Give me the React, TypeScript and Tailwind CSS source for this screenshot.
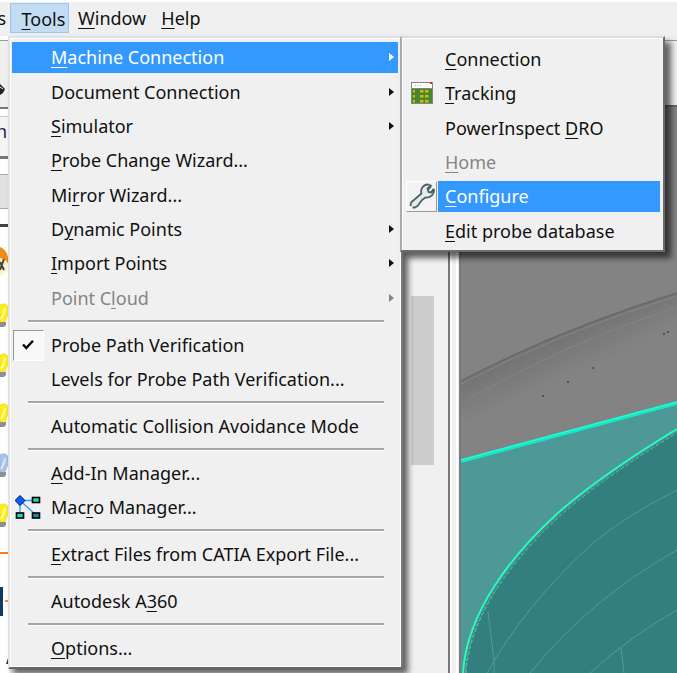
import clsx from "clsx";
import { Fragment, type ReactNode } from "react";

type Item = {
    label: string;
    // index of the underlined access key, none when missing
    key?: number;
    arrow?: boolean;
    disabled?: boolean;
    active?: boolean;
    icon?: "check" | "macro" | "tracking" | "wrench";
};

const toolGroups: Item[][] = [
    [
        { label: "Machine Connection", key: 0, arrow: true, active: true },
        { label: "Document Connection", arrow: true },
        { label: "Simulator", key: 0, arrow: true },
        { label: "Probe Change Wizard...", key: 0 },
        { label: "Mirror Wizard...", key: 2 },
        { label: "Dynamic Points", key: 1, arrow: true },
        { label: "Import Points", key: 0, arrow: true },
        { label: "Point Cloud", key: 7, arrow: true, disabled: true },
    ],
    [
        { label: "Probe Path Verification", icon: "check" },
        { label: "Levels for Probe Path Verification..." },
    ],
    [{ label: "Automatic Collision Avoidance Mode" }],
    [
        { label: "Add-In Manager...", key: 0 },
        { label: "Macro Manager...", key: 3, icon: "macro" },
    ],
    [{ label: "Extract Files from CATIA Export File...", key: 0 }],
    [{ label: "Autodesk A360", key: 10 }],
    [{ label: "Options...", key: 0 }],
];

const connectionItems: Item[] = [
    { label: "Connection", key: 0 },
    { label: "Tracking", key: 0, icon: "tracking" },
    { label: "PowerInspect DRO", key: 13 },
    { label: "Home", key: 0, disabled: true },
    { label: "Configure", key: 0, icon: "wrench", active: true },
    { label: "Edit probe database", key: 0 },
];

const Label = ({ text, at }: { text: string; at?: number }) => {
    if (at === undefined) return <span>{text}</span>;
    return (
        <span>
            {text.slice(0, at)}
            <span className="underline decoration-1 underline-offset-3">{text[at]}</span>
            {text.slice(at + 1)}
        </span>
    );
};

const CheckIcon = () => (
    <span className="flex size-[31px] items-center justify-center border-t border-l border-t-[#999] border-l-[#999] border-r border-b border-r-white border-b-white bg-[#f8f8f8]">
        <svg viewBox="0 0 12 12" className="size-3" fill="none" stroke="#000" strokeWidth="2.4">
            <path d="M1 5.5 4.3 9 11 1.8" />
        </svg>
    </span>
);

const MacroIcon = () => (
    <svg viewBox="0 0 26 24" className="h-6 w-[26px]">
        <path d="M5 5.500H21M5 5.500V20M5 5.500 21 20" stroke="#3399ff" strokeWidth="1.300" fill="none" />
        <path d="M5 .5 10 5.500 5 10.500 0 5.500Z" fill="#0a5cff" stroke="#00164d" />
        <g fill="#18dcc0" stroke="#000" strokeWidth="1.600">
            <rect x="17.500" y="2.500" width="7" height="5" />
            <rect x="1.500" y="18" width="7" height="5" />
            <rect x="17.500" y="18" width="7" height="5" fill="#128fb0" />
        </g>
    </svg>
);

const TrackingIcon = () => (
    <svg viewBox="0 0 22 22" className="size-[22px]">
        <rect width="22" height="22" fill="#858585" />
        <rect x="1" y="1" width="20" height="5" fill="#fff" />
        <rect x="1" y="7" width="20" height="14" fill="#4a8531" />
        <path d="M4 3.500H11" stroke="#aaa" strokeDasharray="1 1.500" />
        <rect x="19" y="0" width="2" height="2" fill="#f01818" />
        <g fill="#d4b90d">
            {[8, 13, 18].map((y) => (
                <Fragment key={y}>
                    <rect x="2" y={y} width="2" height="2.500" />
                    <rect x="9" y={y} width="3.500" height="2.500" />
                    <rect x="14" y={y} width="3.500" height="2.500" />
                </Fragment>
            ))}
        </g>
    </svg>
);

const WrenchIcon = () => (
    <span className="flex size-[31px] items-center justify-center border border-t-white border-l-white border-r-[#999] border-b-[#999] bg-[#f3f3f3]">
        <svg viewBox="0 0 26 26" className="size-[26px]" fill="#e6ecec" stroke="#4b6265" strokeWidth="1.800" strokeLinejoin="round">
            <path d="M2 19.500 12.500 10.500C11 6 14.500 1.500 19 1.500L22 2.500 18.500 5.500 19.500 9 22.500 9.500 25 6.500C25.500 11 22 15 16.500 14.500L13 17 8.500 23 6 24.500H3.500" />
            <path d="M2 19.500 1.500 23M19 6.500 22 3.500M22 9.500 24.500 6" />
        </svg>
    </span>
);

const icons: Record<string, ReactNode> = {
    check: <CheckIcon />,
    macro: <MacroIcon />,
    tracking: <TrackingIcon />,
    wrench: <WrenchIcon />,
};

const MenuItem = ({ item, sub = false }: { item: Item; sub?: boolean }) => (
    <button
        role="menuitem"
        disabled={item.disabled}
        className={clsx(
            "flex h-full w-full items-center text-left whitespace-nowrap",
            item.disabled ? "text-[#858585]" : item.active ? "text-white" : "text-[#111]",
        )}
    >
        <span
            className={clsx(
                "flex h-[31px] shrink-0 items-center justify-center",
                sub ? "w-[33px]" : "w-8",
                item.active && !sub && "bg-[#3399ff]",
            )}
        >
            {item.icon && icons[item.icon]}
        </span>
        <span
            className={clsx(
                "flex h-[31px] grow items-center justify-between pr-1 pl-[7px]",
                item.active && "bg-[#3399ff]",
            )}
        >
            <Label text={item.label} at={item.key} />
            {item.arrow && (
                <svg viewBox="0 0 5 8" className="h-2 w-[5px]" fill="currentColor">
                    <path d="M0 0 5 4 0 8Z" />
                </svg>
            )}
        </span>
    </button>
);

const ToolsMenu = () => (
    <div
        role="menu"
        className="absolute top-9 left-2 w-[395px] border-2 border-t-[#e2e2e2] border-l-[#e2e2e2] border-r-[#777] border-b-[#666] bg-[#f0f0f0] shadow-[5px_5px_6px_rgba(0,0,0,0.6)]"
    >
        <div className="border border-white py-px pr-0.5 pl-px">
            {toolGroups.map((group, i) => (
                <Fragment key={i}>
                    {i > 0 && (
                        <div className="flex h-[13px] items-center pr-[14px] pl-4">
                            <hr className="h-[3px] w-full border-t-2 border-b border-t-[#a5a5a5] border-b-white" />
                        </div>
                    )}
                    <div className={clsx("grid", i === 0 ? "h-[275px] auto-rows-fr" : "auto-rows-[34px]")}>
                        {group.map((item) => (
                            <MenuItem key={item.label} item={item} />
                        ))}
                    </div>
                </Fragment>
            ))}
        </div>
    </div>
);

const ConnectionMenu = () => (
    <div
        role="menu"
        className="absolute top-9 left-[400px] w-[265px] border-2 border-t-[#dcdcdc] border-l-[#aaa] border-r-[#6c6c6c] border-b-[#6c6c6c] bg-[#f0f0f0] shadow-[6px_6px_6px_rgba(0,0,0,0.6)]"
    >
        <div className="border-t border-l border-t-white border-l-white pt-[3px] pr-[3px] pb-0.5 pl-0.5">
            <div className="grid h-[206px] auto-rows-fr">
                {connectionItems.map((item) => (
                    <MenuItem key={item.label} item={item} sub />
                ))}
            </div>
        </div>
    </div>
);

const MenuBar = () => (
    <nav className="flex h-9 items-center border-t-2 border-white bg-[#f0f0f0] pb-0.5 text-[#111]">
        <button className="flex w-[10px] justify-end pr-1">s</button>
        <button className="h-[30px] w-[59px] border border-[#90c8f6] bg-[#c2ddf3] pt-0.5 pl-2">
            <Label text="Tools" at={0} />
        </button>
        <button className="ml-[9px]">
            <Label text="Window" at={0} />
        </button>
        <button className="ml-[15px]">
            <Label text="Help" at={0} />
        </button>
    </nav>
);

const Bulb = ({ y, blue = false }: { y: number; blue?: boolean }) => (
    <g transform={`translate(0 ${y})`}>
        <path
            d="M0 1Q6-2 8 3V10Q6 16 4 19H0Z"
            fill={blue ? "#a9c3ec" : "#ffee17"}
            stroke={blue ? "#9db3d8" : "#f0e030"}
        />
        <path d="M5 4Q5 8 1 15" stroke={blue ? "#dbe7fa" : "#fffbb0"} strokeWidth="2" fill="none" />
        <path d="M0 18H6V21L4 23H0Z" fill="#909090" />
    </g>
);

// narrow strip of toolbars and tree that stays visible beside the open menu
const TreeStrip = () => (
    <aside className="flex w-[9px] shrink-0 flex-col overflow-hidden bg-white">
        <div className="mt-1 flex h-[69px] shrink-0 items-center border-t border-b-2 border-t-[#999] border-b-[#777] bg-[#f0f0f0]">
            <svg viewBox="0 0 6 12" className="mt-8 h-3 w-1.5">
                <path d="M0 0 5 5 3 9 0 11Z" fill="#222" />
                <path d="M0 3 3 5" stroke="#eee" />
            </svg>
        </div>
        <div className="mt-[7px] flex h-10 shrink-0 items-start justify-end border-t border-[#ccc] bg-[#f5f5f5] pt-0.5 pr-0.5 text-[#22264a]">
            n
        </div>
        <div className="h-[3px] shrink-0 bg-[#777]" />
        <div className="mt-[15px] h-[35px] shrink-0 border-y border-[#aaa] bg-[#e1e1e1]" />
        <div className="mt-[15px] h-[3px] shrink-0 bg-[#444]" />
        <svg viewBox="0 227 8 446" className="h-[446px] w-2 shrink-0">
            <path d="M0 247Q6 249 8 257V263L0 260Z" fill="#f18a16" />
            <path d="M0 258Q8 259 8 266 8 272 0 276Z" fill="#fff3ca" />
            <path d="M0 270 4 259M0 262 4 270" stroke="#444" strokeWidth="2" />
            <Bulb y={304} />
            <Bulb y={354} />
            <Bulb y={404} />
            <Bulb y={454} blue />
            <Bulb y={504} />
            <path d="M0 553H8" stroke="#ff7b1a" strokeWidth="2" />
            <path d="M0 587H3V616H0Z" fill="#0c3d66" />
            <path d="M5 601H8" stroke="#ff8a30" strokeWidth="2" />
            <path d="M8 658V664H6Z" fill="#0c3d66" />
        </svg>
    </aside>
);

const ModelView = () => (
    <svg viewBox="461 107 216 566" preserveAspectRatio="xMinYMin slice" className="h-full w-full">
        <defs>
            <linearGradient id="rim" gradientUnits="userSpaceOnUse" x1="560" y1="335" x2="577" y2="372">
                <stop offset="0" stopColor="#737373" />
                <stop offset="1" stopColor="#838383" />
            </linearGradient>
        </defs>
        <rect x="461" y="107" width="216" height="566" fill="#838383" />
        <path d="M461 382Q560 329 677 293V403L461 461Z" fill="url(#rim)" />
        <path d="M461 381Q560 329 677 293" stroke="#686868" strokeWidth="1.500" fill="none" />
        <path d="M461 384Q560 332 677 296" stroke="#868686" fill="none" />
        <path d="M461 403Q565 343 677 307" stroke="#858585" fill="none" />
        <path d="M461 447Q565 368 677 327" stroke="#7e7e7e" strokeWidth="0.500" fill="none" />
        <path d="M542 396h2M567 382h2M592 368h2M663 334h2M667 332h2" stroke="#444" strokeWidth="1.500" />
        <path d="M461 461 677 403V673H461Z" fill="#4e9898" />
        <path d="M461 461 677 403" stroke="#18e6c5" strokeWidth="4" />
        <path d="M461 460 677 402" stroke="#2bffda" strokeWidth="1" />
        <path d="M463 673C467 610 515 552 558 513Q601 475 677 429V673Z" fill="#337e7e" />
        <path d="M463 673C467 610 515 552 558 513Q601 475 677 429" stroke="#1fffc6" strokeWidth="2" fill="none" />
        <path d="M465 673C469 611 517 553 560 514Q603 476 679 430" stroke="#b08078" strokeWidth="1" strokeDasharray="3 1" fill="none" />
        <path d="M466 673C470 612 518 554 561 515Q604 477 680 431" stroke="#20dcb8" strokeWidth="1" strokeDasharray="4 2" fill="none" />
        <g stroke="#559b9a" fill="none">
            <path d="M487 673Q525 605 593 543 627 515 677 490" />
            <path d="M530 673Q590 599 677 550" />
            <path d="M590 673Q628 638 677 610" />
            <path d="M488 611 494 661V673M621 648 624 673" />
        </g>
    </svg>
);

const Workspace = () => (
    <div className="flex grow">
        <TreeStrip />
        <div className="flex w-[439px] shrink-0 flex-col bg-[#f0f0f0]">
            <div className="mt-[260px] ml-[402px] h-[169px] w-[23px] bg-[#cdcdcd]" />
        </div>
        <div className="flex w-[13px] shrink-0 border-r-2 border-l-2 border-r-[#7a7a7a] border-l-[#777] bg-[#f0f0f0]">
            <div className="w-0.5 bg-white" />
            <div className="ml-1 w-0.5 bg-white" />
        </div>
        <div className="flex min-w-0 grow flex-col bg-[#f0f0f0]">
            <div className="mt-1 h-[67px] shrink-0 border-t border-b-2 border-t-[#999] border-b-[#666]" />
            <div className="min-h-0 grow overflow-hidden">
                <ModelView />
            </div>
        </div>
    </div>
);

export default function App() {
    return (
        <div className="relative flex min-h-screen flex-col overflow-hidden bg-[#f0f0f0] font-['Noto_Sans',sans-serif] text-lg/6">
            <MenuBar />
            <Workspace />
            <ToolsMenu />
            <ConnectionMenu />
        </div>
    );
}
